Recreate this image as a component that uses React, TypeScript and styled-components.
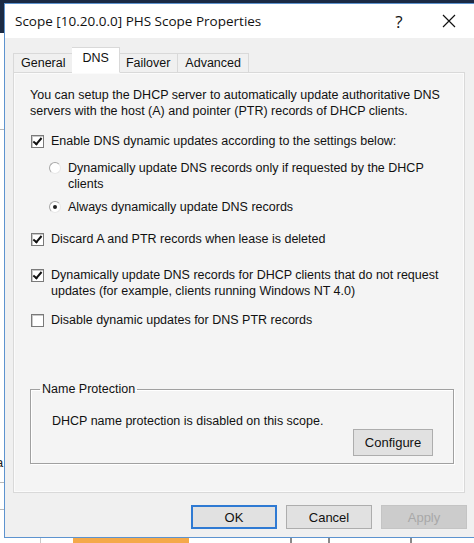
import styled, { createGlobalStyle } from "styled-components";

const GlobalStyle = createGlobalStyle`
  html, body {
    margin: 0;
    padding: 0;
    background: #ffffff;
  }
  body {
    font-family: "Liberation Sans", Arial, sans-serif;
  }
`;

const UI_FONT = `"Liberation Sans", Arial, sans-serif`;

export default function App() {
  return (
    <Desktop>
      <GlobalStyle />
      <TopBand />
      <SideStrip>
        <SideDark />
        <SideRule $top={96} $width={4} />
        <SideGlyph $top={326}>a</SideGlyph>
        <SideRule $top={12} $width={4} />
        <SideRule $top={26} $width={4} />
      </SideStrip>
      <Taskbar>
        <TaskDivider $left={40} />
        <OrangeBar />
        <TaskMark $left={290} />
        <TaskMark $left={328} />
        <TaskMark $left={410} />
      </Taskbar>

      <Window>
        <TitleBar>
          <Title>Scope [10.20.0.0] PHS Scope Properties</Title>
          <TitleButton $width={48}>?</TitleButton>
          <TitleButton $width={52}>
            <svg width="14" height="14" viewBox="0 0 14 14">
              <path d="M1 1 L13 13 M13 1 L1 13" stroke="#111" strokeWidth="1.2" />
            </svg>
          </TitleButton>
        </TitleBar>

        <Body>
          <TabStrip>
            <Tab>General</Tab>
            <Tab $active>DNS</Tab>
            <Tab>Failover</Tab>
            <Tab>Advanced</Tab>
          </TabStrip>

          <TabPage>
            <Intro>
              You can setup the DHCP server to automatically update authoritative DNS
              <br />
              servers with the host (A) and pointer (PTR) records of DHCP clients.
            </Intro>

            <Option $mt={14}>
              <CheckBox $checked />
              <Label>Enable DNS dynamic updates according to the settings below:</Label>
            </Option>

            <RadioGroup>
              <Option>
                <Radio />
                <Label>
                  Dynamically update DNS records only if requested by the DHCP
                  <br />
                  clients
                </Label>
              </Option>
              <Option $mt={7}>
                <Radio $checked />
                <Label>Always dynamically update DNS records</Label>
              </Option>
            </RadioGroup>

            <Option $mt={16}>
              <CheckBox $checked />
              <Label>Discard A and PTR records when lease is deleted</Label>
            </Option>

            <Option $mt={20}>
              <CheckBox $checked />
              <Label>
                Dynamically update DNS records for DHCP clients that do not request
                <br />
                updates (for example, clients running Windows NT 4.0)
              </Label>
            </Option>

            <Option $mt={13}>
              <CheckBox />
              <Label>Disable dynamic updates for DNS PTR records</Label>
            </Option>

            <GroupBox>
              <Legend>Name Protection</Legend>
              <GroupText>DHCP name protection is disabled on this scope.</GroupText>
              <GroupActions>
                <Button $width={80} $height={27}>Configure</Button>
              </GroupActions>
            </GroupBox>
          </TabPage>

          <Footer>
            <Button $primary>OK</Button>
            <Button>Cancel</Button>
            <Button $disabled>Apply</Button>
          </Footer>
        </Body>
      </Window>
    </Desktop>
  );
}

const Desktop = styled.div`
  position: relative;
  width: 474px;
  height: 543px;
  overflow: hidden;
  background: #ffffff;
  font-family: ${UI_FONT};
`;

const TopBand = styled.div`
  height: 3px;
  background: #1b2a44;
`;

const SideStrip = styled.div`
  width: 4px;
  height: 540px;
  background: #ffffff;
  overflow: hidden;
`;

const SideDark = styled.div`
  height: 30px;
  background: #1b2a44;
`;

const SideRule = styled.div<{ $top: number; $width: number }>`
  margin-top: ${(p) => p.$top}px;
  width: ${(p) => p.$width}px;
  height: 1px;
  background: #b9b9b9;
`;

const SideGlyph = styled.div<{ $top: number }>`
  margin-top: ${(p) => p.$top}px;
  height: 14px;
  font-size: 13px;
  line-height: 14px;
  color: #222;
  text-indent: -4px;
`;

const Taskbar = styled.div`
  position: absolute;
  left: 0;
  right: 0;
  bottom: 0;
  height: 6px;
  background: #ffffff;
`;

const TaskDivider = styled.div<{ $left: number }>`
  position: absolute;
  left: ${(p) => p.$left}px;
  top: 0;
  width: 1px;
  height: 6px;
  background: #c8c8c8;
`;

const OrangeBar = styled.div`
  position: absolute;
  left: 73px;
  top: 0;
  width: 116px;
  height: 6px;
  background: #f4a94a;
`;

const TaskMark = styled.div<{ $left: number }>`
  position: absolute;
  left: ${(p) => p.$left}px;
  top: 1px;
  width: 2px;
  height: 5px;
  background: #8a8a8a;
`;

/* the dialog sits on top of the desktop */
const Window = styled.div`
  position: absolute;
  left: 4px;
  top: 3px;
  width: 484px;
  height: 533px;
  border: 1px solid #5d93cf;
  border-right: none;
  background: #f0f0f0;
  display: flex;
  flex-direction: column;
`;

const TitleBar = styled.div`
  height: 34px;
  background: #ffffff;
  display: flex;
  align-items: center;
  padding-left: 10px;
  padding-right: 14px;
`;

const Title = styled.div`
  flex: 1;
  font-family: "Open Sans", ${UI_FONT};
  font-size: 13.5px;
  color: #111;
`;

const TitleButton = styled.div<{ $width: number }>`
  width: ${(p) => p.$width}px;
  height: 34px;
  display: flex;
  align-items: center;
  justify-content: center;
  font-family: "Open Sans", ${UI_FONT};
  font-size: 17px;
  color: #111;
`;

const Body = styled.div`
  flex: 1;
  box-sizing: border-box;
  width: 468px;
  padding: 10px 8px 0 8px;
  display: flex;
  flex-direction: column;
`;

const TabStrip = styled.div`
  display: flex;
  align-items: flex-end;
  height: 25px;
  position: relative;
  z-index: 1;
  margin-bottom: -1px;
`;

const Tab = styled.div<{ $active?: boolean }>`
  height: ${(p) => (p.$active ? 26 : 20)}px;
  padding: ${(p) => (p.$active ? "3px 10px 0" : "0 7px")};
  margin: 0 ${(p) => (p.$active ? -1 : 0)}px;
  display: flex;
  align-items: ${(p) => (p.$active ? "flex-start" : "center")};
  box-sizing: border-box;
  background: ${(p) => (p.$active ? "#ffffff" : "#f0f0f0")};
  border: 1px solid #d9d9d9;
  border-bottom: 1px solid ${(p) => (p.$active ? "#ffffff" : "#d9d9d9")};
  font-size: 12.5px;
  color: #111;
  position: relative;
  z-index: ${(p) => (p.$active ? 2 : 1)};
  & + & {
    border-left: none;
  }
`;

const TabPage = styled.div`
  height: 421px;
  box-sizing: border-box;
  border: 1px solid #d9d9d9;
  background: #f4f4f4;
  box-shadow: inset 0 0 0 1px #fbfbfb;
  padding: 14px 10px 0 16px;
  display: flex;
  flex-direction: column;
`;

const Intro = styled.p`
  margin: 0;
  font-size: 12.5px;
  line-height: 16px;
  color: #111;
  white-space: nowrap;
`;

const Option = styled.div<{ $mt?: number }>`
  display: flex;
  align-items: flex-start;
  gap: 7px;
  padding-left: 1px;
  margin-top: ${(p) => p.$mt ?? 0}px;
`;

const Label = styled.span`
  font-size: 12.5px;
  line-height: 16px;
  color: #111;
  white-space: nowrap;
`;

const CheckBox = styled.span<{ $checked?: boolean }>`
  flex: none;
  width: 13px;
  height: 13px;
  margin-top: 2px;
  box-sizing: border-box;
  border: 1px solid #7a7a7a;
  background: #ffffff;
  box-shadow: inset 1px 1px 0 #c9c9c9;
  position: relative;
  &::after {
    content: "";
    display: ${(p) => (p.$checked ? "block" : "none")};
    position: absolute;
    left: 3px;
    top: 0px;
    width: 3px;
    height: 7px;
    border: solid #111;
    border-width: 0 2px 2px 0;
    transform: rotate(40deg);
  }
`;

const RadioGroup = styled.div`
  padding-left: 18px;
  margin-top: 11px;
`;

const Radio = styled.span<{ $checked?: boolean }>`
  flex: none;
  width: 12px;
  height: 12px;
  margin-top: 2px;
  box-sizing: border-box;
  border-radius: 50%;
  border: 1px solid #a8a8a8;
  border-right-color: #e8e8e8;
  border-bottom-color: #e8e8e8;
  background: #ffffff;
  display: flex;
  align-items: center;
  justify-content: center;
  &::after {
    content: "";
    display: ${(p) => (p.$checked ? "block" : "none")};
    width: 4px;
    height: 4px;
    border-radius: 50%;
    background: #222;
  }
`;

const GroupBox = styled.fieldset`
  margin: 54px 0 0 0;
  padding: 10px 20px 0 8px;
  height: 82px;
  box-sizing: border-box;
  border: 1px solid #a0a0a0;
  border-radius: 0;
  box-shadow: inset 1px 1px 0 #ffffff, 1px 1px 0 #ffffff;
`;

const Legend = styled.legend`
  margin-left: 1px;
  padding: 0 2px;
  font-size: 12.5px;
  color: #111;
`;

const GroupText = styled.div`
  font-size: 12.5px;
  line-height: 16px;
  color: #111;
  margin-top: 7px;
  padding-left: 13px;
`;

const GroupActions = styled.div`
  display: flex;
  justify-content: flex-end;
  margin-top: 0;
`;

const Button = styled.div<{ $primary?: boolean; $disabled?: boolean; $width?: number; $height?: number }>`
  width: ${(p) => p.$width ?? 86}px;
  height: ${(p) => p.$height ?? 24}px;
  box-sizing: border-box;
  display: flex;
  align-items: center;
  justify-content: center;
  font-size: 13px;
  color: ${(p) => (p.$disabled ? "#a8a8a8" : "#111")};
  background: ${(p) => (p.$disabled ? "#cccccc" : "#e1e1e1")};
  border: ${(p) =>
    p.$primary ? "2px solid #2f7ad3" : p.$disabled ? "1px solid #c4c4c4" : "1px solid #adadad"};
`;

const Footer = styled.div`
  display: flex;
  justify-content: flex-end;
  gap: 9px;
  padding-top: 12px;
  margin-right: -2px;
`;
